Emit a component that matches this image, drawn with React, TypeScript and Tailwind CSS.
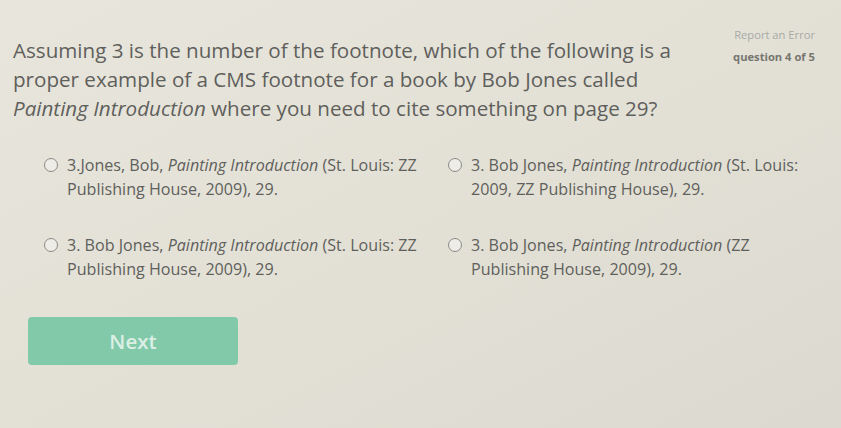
import React from 'react';

const options = [
  {
    lead: '3.Jones, Bob, ',
    title: 'Painting Introduction',
    rest: ' (St. Louis: ZZ Publishing House, 2009), 29.',
  },
  {
    lead: '3. Bob Jones, ',
    title: 'Painting Introduction',
    rest: ' (St. Louis: 2009, ZZ Publishing House), 29.',
  },
  {
    lead: '3. Bob Jones, ',
    title: 'Painting Introduction',
    rest: ' (St. Louis: ZZ Publishing House, 2009), 29.',
  },
  {
    lead: '3. Bob Jones, ',
    title: 'Painting Introduction',
    rest: ' (ZZ Publishing House, 2009), 29.',
  },
];

export default function App() {
  return (
    <div
      className="h-[428px] w-[841px] overflow-hidden bg-gradient-to-br from-[#e8e5dc] via-[#e3e1d6] to-[#dcdad0] text-[#5f5f5c]"
      style={{ fontFamily: '"Open Sans", sans-serif' }}
    >
      <div className="flex justify-between pl-[13px] pr-[26px] pt-[22px]">
        <p className="mt-[14px] w-[690px] text-[20.6px] leading-[29px]">
          Assuming 3 is the number of the footnote, which of the following is a
          proper example of a CMS footnote for a book by Bob Jones called{' '}
          <i>Painting Introduction</i> where you need to cite something on page
          29?
        </p>
        <div className="flex flex-col items-end pt-[5px] text-[11.2px] leading-[16px]">
          <span className="text-[#a9a9a6]">Report an Error</span>
          <span className="mt-[6px] font-bold text-[#76766f]">question 4 of 5</span>
        </div>
      </div>

      <div className="ml-[44px] mt-[30px] grid w-[760px] grid-cols-[404px_1fr] gap-y-[32px]">
        {options.map((o, i) => (
          <div key={i} className="flex items-start gap-[9px] text-[16.1px] leading-[24px]">
            <span className="mt-[5px] h-[14px] w-[14px] shrink-0 rounded-full border-[1.5px] border-[#8a8a86] bg-[#eeece6]" />
            <p className={i % 2 === 0 ? 'w-[362px]' : 'w-[335px]'}>
              {o.lead}
              <i>{o.title}</i>
              {o.rest}
            </p>
          </div>
        ))}
      </div>

      <button
        type="button"
        className="ml-[28px] mt-[36px] h-[48px] w-[210px] rounded-[4px] bg-[#82c9aa] text-[20.5px] font-semibold text-[#dcefe5]"
      >
        Next
      </button>
    </div>
  );
}
